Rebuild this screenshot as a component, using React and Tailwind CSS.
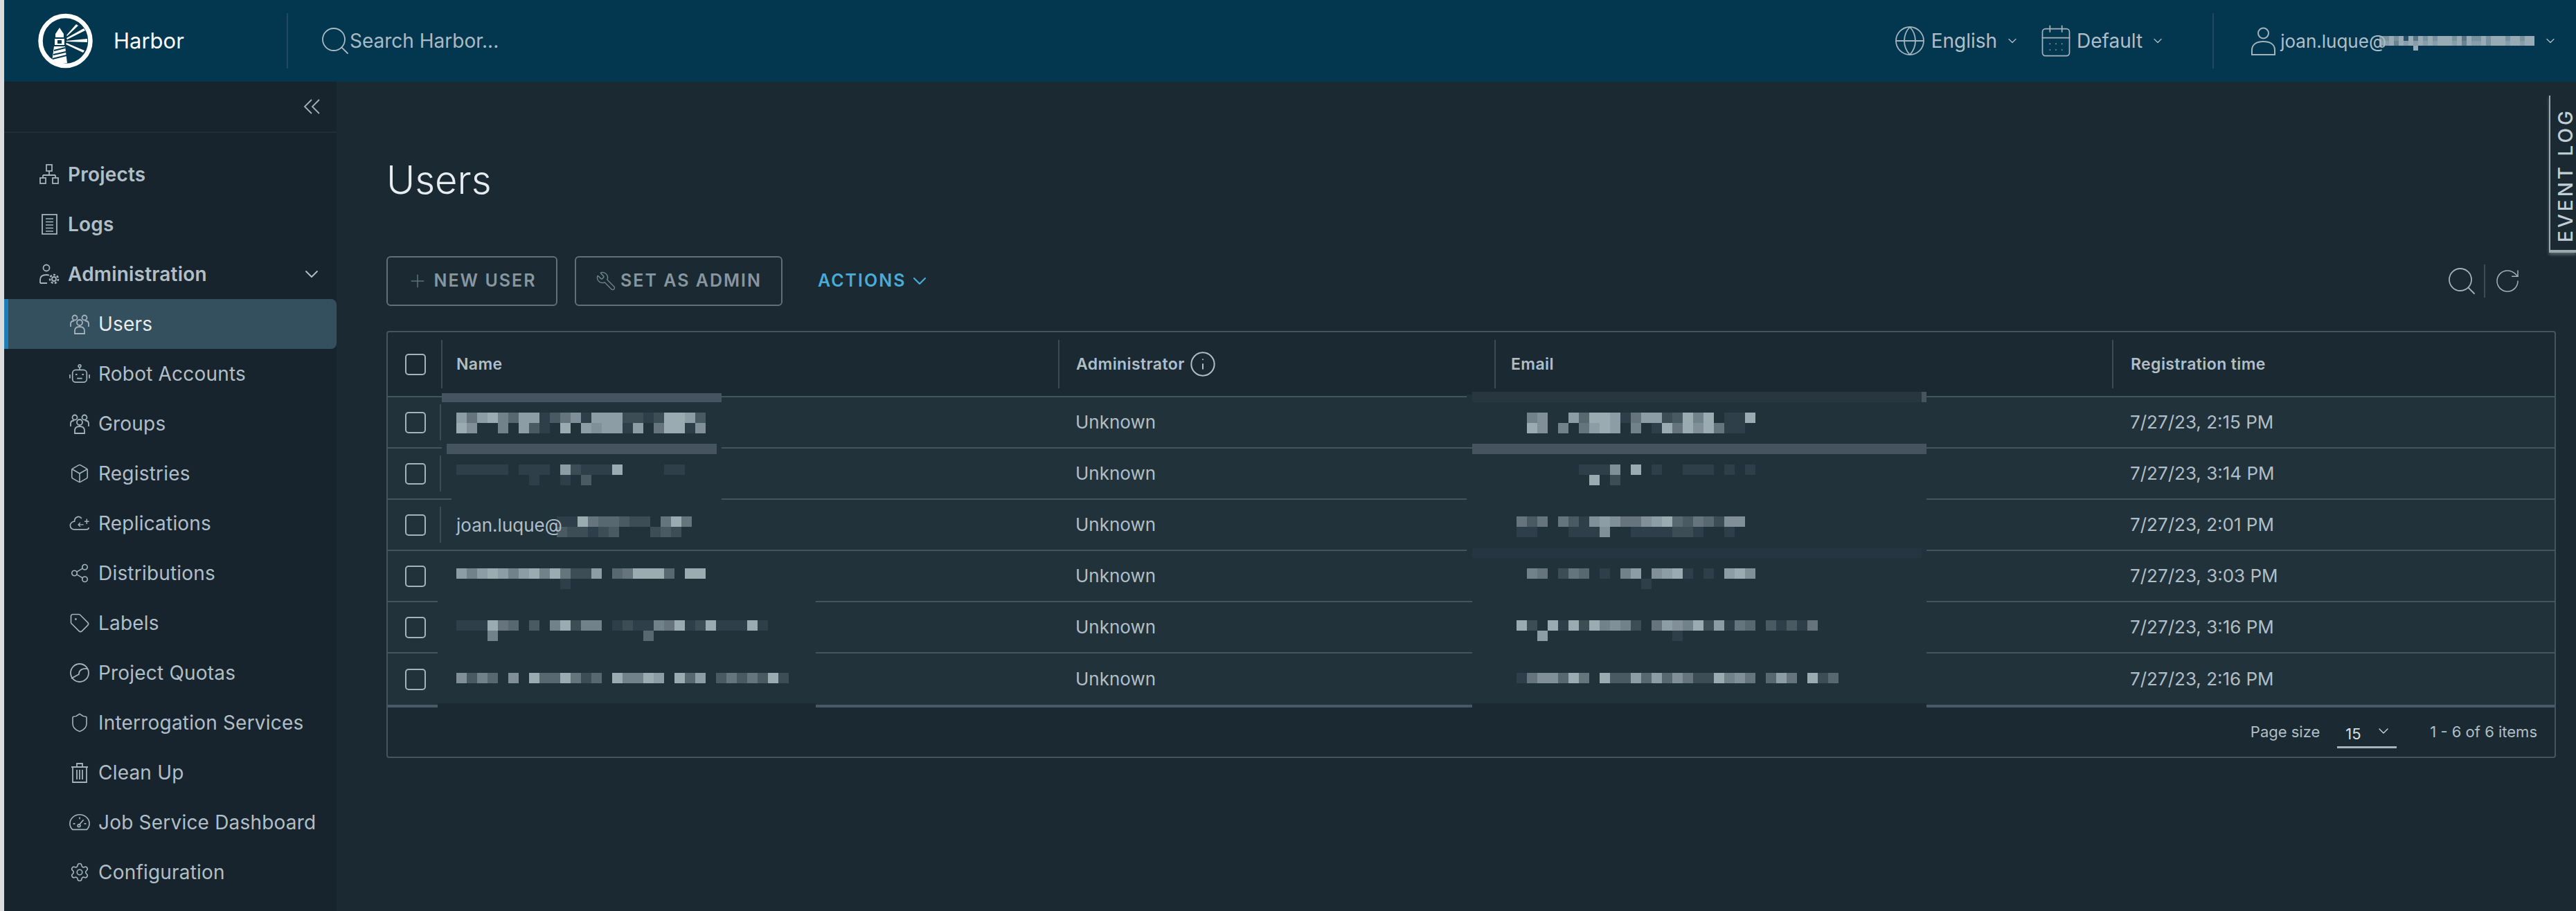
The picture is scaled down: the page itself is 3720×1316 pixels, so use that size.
import React from "react";
import {
  Search, Globe, CalendarDays, ChevronDown, Box, Share2, Tag, Shield, Settings, RotateCw, Wrench, Plus, Info,
} from "lucide-react";

const line = { fill: "none", stroke: "currentColor", strokeWidth: 1.8 };

const ProjectsIcon = () => (
  <svg width="30" height="30" viewBox="0 0 30 30" {...line}>
    <rect x="11" y="1" width="8" height="9" />
    <path d="M15 10v6M6 16h18M6 16v4M24 16v4" />
    <rect x="2" y="20" width="8" height="8" />
    <rect x="20" y="20" width="8" height="8" />
  </svg>
);

const LogsIcon = () => (
  <svg width="30" height="30" viewBox="0 0 30 30" {...line}>
    <rect x="5" y="1" width="21" height="28" />
    <path d="M10 7h11M10 11.500h11M10 16h11M10 20.500h11M10 25h11" strokeWidth="1.500" />
  </svg>
);

const AdminIcon = () => (
  <svg width="30" height="30" viewBox="0 0 30 30" {...line}>
    <circle cx="11" cy="6" r="4.500" />
    <path d="M2 28v-5c0-5 4-7 9-7 2 0 3 .3 4 .8M2 28h10" />
    <circle cx="22" cy="22" r="3" />
    <circle cx="22" cy="22" r="6" strokeWidth="2.500" strokeDasharray="3 2.300" />
  </svg>
);

const GroupIcon = () => (
  <svg width="30" height="30" viewBox="0 0 30 30" {...line}>
    <circle cx="15" cy="13" r="4" />
    <path d="M8 29v-4c0-4 3-6 7-6s7 2 7 6v4z" />
    <circle cx="8" cy="6" r="3.500" />
    <circle cx="22" cy="6" r="3.500" />
    <path d="M2 19v-4c0-3 2-4.500 5-4.500M28 19v-4c0-3-2-4.500-5-4.500" />
  </svg>
);

const RobotIcon = () => (
  <svg width="32" height="30" viewBox="0 0 32 30" {...line}>
    <circle cx="16" cy="3" r="2" />
    <path d="M16 5v4" />
    <rect x="5" y="9" width="22" height="19" rx="5" />
    <path d="M1 16v6M31 16v6M12 22h8" />
    <path d="M11 15v2M21 15v2" strokeWidth="2.500" />
  </svg>
);

const CloudIcon = () => (
  <svg width="32" height="30" viewBox="0 0 32 30" {...line}>
    <path d="M19 7.500C17.500 5.500 15 4.500 13 5c-3 .8-5 3.500-5 7-3.500.5-6.500 3-6.500 6.500 0 3.500 3 6 6 6h19c2.500 0 3.500-1.500 3.500-3" />
    <path d="M27 8v8M23.500 12h7M22 17h-8M17 14l-3 3 3 3" strokeWidth="1.500" />
  </svg>
);

const QuotaIcon = () => (
  <svg width="30" height="30" viewBox="0 0 30 30" {...line}>
    <circle cx="15" cy="15" r="13" />
    <path d="M3 23l11-6c0-6 5-9 12-8" />
  </svg>
);

const TrashIcon = () => (
  <svg width="30" height="30" viewBox="0 0 30 30" {...line}>
    <path d="M3 7h24M11 7V2h8v5M5 7v22h20V7M11 11v14M15 11v14M19 11v14" />
  </svg>
);

const DashboardIcon = () => (
  <svg width="32" height="30" viewBox="0 0 32 30" {...line}>
    <path d="M5 26C2.500 23.500 1 20.500 1 17 1 9 8 3 16 3s15 6 15 14c0 3.500-1.500 6.500-4 9z" />
    <path d="M15 19l7-8M16 7v3M6 17h3M23 17h3" />
    <circle cx="15" cy="20" r="2" />
  </svg>
);

const UserIcon = () => (
  <svg width="37" height="41" viewBox="0 0 37 41" fill="none" stroke="currentColor" strokeWidth="2">
    <circle cx="18.500" cy="9" r="7.500" />
    <path d="M2 40v-7c0-8 7-12 16.500-12S35 25 35 33v7z" />
  </svg>
);

const CollapseIcon = () => (
  <svg width="24" height="22" viewBox="0 0 24 22" fill="none" stroke="currentColor" strokeWidth="1.800">
    <path d="M12 1L2 11l10 10M23 1L13 11l10 10" />
  </svg>
);

const Logo = () => (
  <svg width="81" height="80" viewBox="0 0 81 80" className="shrink-0">
    <circle cx="40.500" cy="40" r="36" fill="none" stroke="#fff" strokeWidth="6.500" />
    <path fill="#fff" d="M26 30l6-9 6 9v5H26zM25 37h14v9H25zM24 48h16l3 24c-7 2-14 1-22-2z" />
    <rect x="29" y="39" width="6" height="5" fill="#03374f" />
    <path stroke="#03374f" strokeWidth="2" d="M24 54l16-4M23 60l18-4M22 66l20-5" />
    <path fill="#fff" d="M42 36l25-14 2 3-26 13zM42 40l30-3v5l-30-1zM42 43l26 11-2 3-25-12zM42 32l14-16 3 2-16 15z" />
  </svg>
);

// pixelated names, each digit is how strong one block of the mosaic shows
const Mosaic = ({ rows, w = 15, h = 15, className = "" }) => (
  <svg width={rows[0].length * w} height={rows.length * h} className={`shrink-0 ${className}`}>
    {rows.map((row, y) =>
      row.split("").map((level, x) =>
        level === "0" ? null : (
          <rect key={`${x}-${y}`} x={x * w} y={y * h} width={w} height={h} fill="#a9b8c0" opacity={Number(level) / 10} />
        )
      )
    )}
  </svg>
);

const topNav = [
  { label: "Projects", icon: <ProjectsIcon /> },
  { label: "Logs", icon: <LogsIcon /> },
];

const subNav = [
  { label: "Users", icon: <GroupIcon />, active: true },
  { label: "Robot Accounts", icon: <RobotIcon /> },
  { label: "Groups", icon: <GroupIcon /> },
  { label: "Registries", icon: <Box size={30} strokeWidth={1.3} /> },
  { label: "Replications", icon: <CloudIcon /> },
  { label: "Distributions", icon: <Share2 size={30} strokeWidth={1.3} /> },
  { label: "Labels", icon: <Tag size={30} strokeWidth={1.3} /> },
  { label: "Project Quotas", icon: <QuotaIcon /> },
  { label: "Interrogation Services", icon: <Shield size={30} strokeWidth={1.3} /> },
  { label: "Clean Up", icon: <TrashIcon /> },
  { label: "Job Service Dashboard", icon: <DashboardIcon /> },
  { label: "Configuration", icon: <Settings size={30} strokeWidth={1.3} /> },
];

const users = [
  {
    name: <Mosaic rows={["858964881357188822129983", "970060831090878818059917"]} className="translate-y-[1px]" />,
    email: <Mosaic rows={["06700849981588239690119", "09706058980601959795110"]} className="translate-y-[1px]" />,
    time: "7/27/23, 2:15 PM",
    divider: true,
  },
  {
    name: <Mosaic rows={["111110111082111900001100", "000000010010300000000000"]} className="translate-y-[2px]" />,
    email: <Mosaic rows={["00000011170901001110101", "00000009020000000000000"]} className="translate-y-[2px]" />,
    time: "7/27/23, 3:14 PM",
    divider: true,
  },
  {
    name: (
      <span className="flex items-center">
        joan.luque@
        <Mosaic rows={["1195443220595", "3221230002320"]} className="-ml-[8px] translate-y-[3px]" />
      </span>
    ),
    email: <Mosaic rows={["5350531787557894354277", "1100011170011112210010"]} className="translate-y-[3px]" />,
    time: "7/27/23, 2:01 PM",
    divider: true,
  },
  {
    name: <Mosaic rows={["868986896952280459994099", "000000000010000000000000"]} className="translate-y-[4px]" />,
    email: <Mosaic rows={["06502540106807891010897", "00000000000010000000000"]} className="translate-y-[4px]" />,
    time: "7/27/23, 3:03 PM",
  },
  {
    name: <Mosaic rows={["111954030692660121165912911191", "000600000000000000400000000000"]} className="translate-y-[5px]" />,
    email: <Mosaic rows={["92091929676205876928154031315", "00800000000000010000000000000"]} className="translate-y-[5px]" />,
    time: "7/27/23, 3:16 PM",
  },
  {
    name: <Mosaic rows={["73640709449524096698094803535392", "00000000000000000000000000000000"]} className="translate-y-[6px]" />,
    email: <Mosaic rows={["1577495093384847522967504850924", "0000000000000000000000000000000"]} className="translate-y-[6px]" />,
    time: "7/27/23, 2:16 PM",
    last: true,
  },
];

const Checkbox = () => <div className="h-[31px] w-[30px] rounded-[5px] border-2 border-[#a5b4bc]" />;

const NavItem = ({ item, sub }) => (
  <div
    className={`flex h-[72px] items-center gap-[12px] ${sub ? "pl-[94px]" : "pl-[50px]"} ${
      item.active ? "rounded-tr-[8px] rounded-br-[8px] border-l-[6px] border-[#1c7fb8] bg-[#34505f] !pl-[88px] text-[#e6ecef]" : ""
    }`}
  >
    <span className="flex w-[30px] justify-center text-[#a3b2bb]">{item.icon}</span>
    <span>{item.label}</span>
  </div>
);

export default function App() {
  return (
    <div className="flex h-[1316px] w-[3720px] flex-col overflow-hidden bg-[#1b2a32] pl-[6px] font-[Inter,sans-serif] text-[#b0bfc7] shadow-[inset_6px_0_0_#dcdcdc]">
      {/* top bar */}
      <header className="flex h-[118px] shrink-0 items-center bg-[#03374f]">
        <div className="flex h-[80px] w-[410px] items-center gap-[29px] border-r-2 border-[#1d4a60] pl-[48px]">
          <Logo />
          <span className="text-[31px] text-white">Harbor</span>
        </div>
        <div className="flex items-center pl-[44px] text-[28px] text-[#a9bac4]">
          <Search size={48} strokeWidth={0.9} />
          <span className="-ml-[3px]">Search Harbor...</span>
        </div>
        <div className="ml-auto flex items-center pr-[27px] text-[28px]">
          <Globe size={48} strokeWidth={0.9} className="text-[#a3b2bb]" />
          <span className="ml-[7px]">English</span>
          <ChevronDown size={20} strokeWidth={1.5} className="ml-[12px]" />
          <CalendarDays size={52} strokeWidth={0.8} className="ml-[27px] text-[#a3b2bb]" />
          <span className="ml-[4px]">Default</span>
          <ChevronDown size={20} strokeWidth={1.5} className="ml-[12px]" />
          <div className="ml-[69px] h-[80px] w-[2px] bg-[#1d4a60]" />
          <span className="ml-[53px] text-[#a3b2bb]">
            <UserIcon />
          </span>
          <span className="ml-[6px] text-[26px]">joan.luque@</span>
          <Mosaic
            w={7}
            h={7}
            rows={["77979295979799979597797999799799", "88969898989899989698897999899899", "00000009000000000000000000000000"]}
            className="-ml-[10px] translate-y-[3px]"
          />
          <ChevronDown size={20} strokeWidth={1.5} className="ml-[13px]" />
        </div>
      </header>

      <div className="relative flex min-h-0 flex-1">
        {/* side nav */}
        <aside className="w-[480px] shrink-0 bg-[#17242d] text-[28px] tracking-[0.2px]">
          <div className="flex h-[74px] items-center justify-end border-b-2 border-[#1f2e37] pr-[24px] text-[#a3b2bb]">
            <CollapseIcon />
          </div>
          <nav className="pt-[24px]">
            <div className="font-semibold">
              {topNav.map((item) => (
                <NavItem key={item.label} item={item} />
              ))}
              <div className="flex h-[72px] items-center gap-[12px] pl-[50px]">
                <span className="flex w-[30px] justify-center text-[#a3b2bb]">
                  <AdminIcon />
                </span>
                <span>Administration</span>
                <ChevronDown size={32} strokeWidth={1.4} className="ml-auto mr-[20px]" />
              </div>
            </div>
            {subNav.map((item) => (
              <NavItem key={item.label} item={item} sub />
            ))}
          </nav>
        </aside>

        {/* page */}
        <main className="min-w-0 flex-1 pl-[72px] pr-[29px]">
          <h1 className="mt-[110px] text-[56px] font-light leading-[64px] text-[#e6ecef]">Users</h1>

          <div className="mt-[78px] flex h-[72px] items-center">
            <button className="flex h-[72px] w-[247px] items-center justify-center gap-[8px] rounded-[6px] border-2 border-[#5f7079] text-[25px] font-semibold tracking-[2px] text-[#87969f]">
              <Plus size={30} strokeWidth={1.2} className="text-[#5f7079]" />
              NEW USER
            </button>
            <button className="ml-[25px] flex h-[72px] w-[300px] items-center justify-center gap-[6px] rounded-[6px] border-2 border-[#5f7079] text-[25px] font-semibold tracking-[2px] text-[#87969f]">
              <Wrench size={30} strokeWidth={1.2} className="-scale-x-100 text-[#6e7f88]" />
              SET AS ADMIN
            </button>
            <div className="ml-[51px] flex items-center gap-[3px] text-[25px] font-semibold tracking-[2px] text-[#49acd8]">
              ACTIONS
              <ChevronDown size={32} strokeWidth={1.6} />
            </div>
            <div className="ml-auto flex items-center text-[#a3b2bb]">
              <Search size={48} strokeWidth={0.9} />
              <div className="ml-[8px] h-[48px] w-[2px] bg-[#3c4c55]" />
              <RotateCw size={40} strokeWidth={0.9} className="ml-[12px] mr-[50px]" />
            </div>
          </div>

          {/* users table */}
          <div className="relative mt-[36px] rounded-[4px] border-2 border-[#44555f]">
            <div className="flex h-[94px] items-center border-b-2 border-[#44555f] text-[23px] font-semibold tracking-[0.4px]">
              <div className="flex w-[77px] shrink-0 justify-center pl-[2px]"><Checkbox /></div>
              <div className="flex h-[70px] w-[891px] shrink-0 items-center border-l-2 border-[#3c4c55] pl-[20px]">Name</div>
              <div className="flex h-[70px] w-[630px] shrink-0 items-center gap-[6px] border-l-2 border-[#3c4c55] pl-[24px]">
                Administrator
                <Info size={40} strokeWidth={1.2} />
              </div>
              <div className="flex h-[70px] w-[892px] shrink-0 items-center border-l-2 border-[#3c4c55] pl-[22px]">Email</div>
              <div className="flex h-[70px] flex-1 items-center border-l-2 border-[#3c4c55] pl-[25px]">Registration time</div>
            </div>

            {users.map((user) => (
              <div
                key={user.time}
                className={`flex items-center bg-[#22323b] text-[26px] ${
                  user.last ? "h-[78px] border-b-4 border-[#4a5a64]" : "h-[74px] border-b-2 border-[#44555f]"
                }`}
              >
                <div className="flex w-[75px] shrink-0 justify-center pl-[4px]"><Checkbox /></div>
                <div className={`flex h-[52px] w-[893px] shrink-0 items-center pl-[22px] ${user.divider ? "border-l-2 border-[#3c4c55]" : "border-l-2 border-transparent"}`}>
                  {user.name}
                </div>
                <div className="flex w-[630px] shrink-0 items-center pb-[2px] pl-[25px]">Unknown</div>
                <div className="flex w-[892px] shrink-0 items-center pl-[32px]">{user.email}</div>
                <div className="flex flex-1 items-center pb-[2px] pl-[26px]">{user.time}</div>
              </div>
            ))}

            <div className="flex h-[71px] items-center justify-end pr-[25px] text-[22px]">
              <span>Page size</span>
              <div className="ml-[25px] flex h-[46px] w-[86px] items-center border-b-[3px] border-[#a5b4bc] pl-[12px] pt-[8px] text-[#d8e0e4]">
                15
                <ChevronDown size={24} strokeWidth={1.2} className="-mt-[8px] ml-[20px]" />
              </div>
              <span className="ml-[48px]">1 - 6 of 6 items</span>
            </div>

            {/* patches left in the picture by the blurred cells */}
            <div className="absolute left-[78px] top-[88px] h-[13px] w-[404px] bg-[#45545f]" />
            <div className="absolute left-[78px] top-[161px] h-[15px] w-[404px] bg-[#22323b]" />
            <div className="absolute left-[85px] top-[161px] h-[15px] w-[390px] bg-[#45545f]" />
            <div className="absolute left-[92px] top-[236px] h-[10px] w-[390px] bg-[#22323b]" />
            <div className="absolute left-[72px] top-[386px] h-[6px] w-[546px] bg-[#22323b]" />
            <div className="absolute left-[72px] top-[460px] h-[6px] w-[546px] bg-[#22323b]" />
            <div className="absolute left-[72px] top-[536px] h-[6px] w-[546px] bg-[#1b2a32]" />
            <div className="absolute left-[1558px] top-[90px] h-[6px] w-[664px] bg-[#22323b]" />
            <div className="absolute left-[1566px] top-[86px] h-[15px] w-[649px] bg-[#27363f]" />
            <div className="absolute left-[2215px] top-[86px] h-[15px] w-[7px] bg-[#45545f]" />
            <div className="absolute left-[1566px] top-[161px] h-[15px] w-[656px] bg-[#45545f]" />
            <div className="absolute left-[1558px] top-[238px] h-[6px] w-[664px] bg-[#22323b]" />
            <div className="absolute left-[1558px] top-[312px] h-[6px] w-[664px] bg-[#22323b]" />
            <div className="absolute left-[1566px] top-[312px] h-[14px] w-[649px] bg-[#263640]" />
            <div className="absolute left-[1566px] top-[386px] h-[6px] w-[656px] bg-[#22323b]" />
            <div className="absolute left-[1566px] top-[460px] h-[6px] w-[656px] bg-[#22323b]" />
            <div className="absolute left-[1566px] top-[536px] h-[6px] w-[656px] bg-[#1b2a32]" />
          </div>
        </main>

        {/* event log tab */}
        <div className="absolute right-0 top-[20px] flex h-[227px] w-[39px] items-end justify-end border-b-[4px] border-l-2 border-[#9aa8b0] pb-[11px] pr-[2px] shadow-[0_3px_4px_#55656e]">
          <span className="rotate-180 whitespace-nowrap text-[28px] font-medium leading-[26px] tracking-[4px] text-[#c2ced5] [writing-mode:vertical-rl]">
            EVENT LOG
          </span>
        </div>
      </div>
    </div>
  );
}
